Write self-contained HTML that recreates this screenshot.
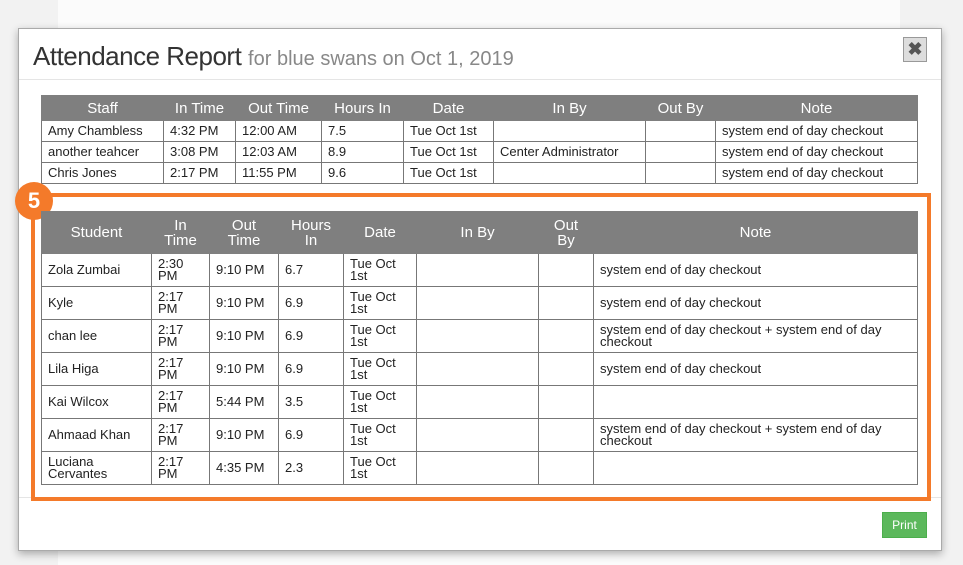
<!DOCTYPE html>
<html><head><style>
*{box-sizing:border-box;margin:0;padding:0}
body{width:963px;height:565px;overflow:hidden;background:#f2f2f2;font-family:"Liberation Sans",sans-serif;position:relative}
.bg{position:absolute;left:58px;top:0;width:842px;height:565px;background:#fbfbfb}
.modal{position:absolute;left:18px;top:28px;width:924px;height:523px;background:#fff;border:1px solid #aaa;box-shadow:0 3px 8px rgba(0,0,0,.3)}
.title{position:absolute;left:14px;top:12px;font-size:26px;color:#333;letter-spacing:-0.5px}
.title span{font-size:20px;color:#888;letter-spacing:0}
.hr{position:absolute;left:0;width:100%;height:1px;background:#e5e5e5}
.close{position:absolute;left:884px;top:8px;width:24px;height:25px;background:#ddd;border:1px solid #999;text-align:center;font-size:18px;font-weight:bold;color:#555;line-height:22px}
table{position:absolute;border-collapse:collapse;table-layout:fixed;font-size:13px;color:#222}
th{background:#7f7f7f;color:#fff;font-weight:normal;font-size:15px;line-height:15px;border:1px solid #7f7f7f}
td{border:1px solid #777;padding:0 6px;vertical-align:middle}
.t1 td{height:21px;line-height:14px}
.t2 td{height:33px;line-height:12px}
.orange{position:absolute;left:31px;top:193px;width:900px;height:308px;border:4px solid #f47a2a}
.circ{position:absolute;left:15px;top:182px;width:38px;height:38px;border-radius:50%;background:#f47a2a;color:#fff;font-weight:bold;font-size:22px;text-align:center;line-height:38px}
.print{position:absolute;left:863px;top:483px;width:45px;height:26px;background:#5cb85c;border:1px solid #4cae4c;color:#fff;font-size:12px;text-align:center;line-height:24px}
</style></head><body>
<div class="bg"></div>
<div class="modal">
<div class="title">Attendance Report <span>for blue swans on Oct 1, 2019</span></div>
<div class="close">✖</div>
<div class="hr" style="top:50px"></div>
<div class="hr" style="top:468px"></div>
<div class="print">Print</div>
</div>
<table class="t1" style="left:41px;top:95px;width:877px">
<colgroup><col style="width:122px"><col style="width:72px"><col style="width:86px"><col style="width:82px"><col style="width:90px"><col style="width:152px"><col style="width:70px"><col></colgroup>
<tr style="height:25px"><th>Staff</th><th>In Time</th><th>Out Time</th><th>Hours In</th><th>Date</th><th>In By</th><th>Out By</th><th>Note</th></tr>
<tr><td>Amy Chambless</td><td>4:32 PM</td><td>12:00 AM</td><td>7.5</td><td>Tue Oct 1st</td><td></td><td></td><td>system end of day checkout</td></tr>
<tr><td>another teahcer</td><td>3:08 PM</td><td>12:03 AM</td><td>8.9</td><td>Tue Oct 1st</td><td>Center Administrator</td><td></td><td>system end of day checkout</td></tr>
<tr><td>Chris Jones</td><td>2:17 PM</td><td>11:55 PM</td><td>9.6</td><td>Tue Oct 1st</td><td></td><td></td><td>system end of day checkout</td></tr>
</table>
<div class="orange"></div>
<div class="circ">5</div>
<table class="t2" style="left:41px;top:211px;width:877px">
<colgroup><col style="width:110px"><col style="width:58px"><col style="width:69px"><col style="width:65px"><col style="width:73px"><col style="width:122px"><col style="width:55px"><col></colgroup>
<tr style="height:42px"><th>Student</th><th>In<br>Time</th><th>Out<br>Time</th><th>Hours<br>In</th><th>Date</th><th>In By</th><th>Out<br>By</th><th>Note</th></tr>
<tr><td>Zola Zumbai</td><td>2:30<br>PM</td><td>9:10 PM</td><td>6.7</td><td>Tue Oct<br>1st</td><td></td><td></td><td>system end of day checkout</td></tr>
<tr><td>Kyle</td><td>2:17<br>PM</td><td>9:10 PM</td><td>6.9</td><td>Tue Oct<br>1st</td><td></td><td></td><td>system end of day checkout</td></tr>
<tr><td>chan lee</td><td>2:17<br>PM</td><td>9:10 PM</td><td>6.9</td><td>Tue Oct<br>1st</td><td></td><td></td><td>system end of day checkout + system end of day<br>checkout</td></tr>
<tr><td>Lila Higa</td><td>2:17<br>PM</td><td>9:10 PM</td><td>6.9</td><td>Tue Oct<br>1st</td><td></td><td></td><td>system end of day checkout</td></tr>
<tr><td>Kai Wilcox</td><td>2:17<br>PM</td><td>5:44 PM</td><td>3.5</td><td>Tue Oct<br>1st</td><td></td><td></td><td></td></tr>
<tr><td>Ahmaad Khan</td><td>2:17<br>PM</td><td>9:10 PM</td><td>6.9</td><td>Tue Oct<br>1st</td><td></td><td></td><td>system end of day checkout + system end of day<br>checkout</td></tr>
<tr><td>Luciana<br>Cervantes</td><td>2:17<br>PM</td><td>4:35 PM</td><td>2.3</td><td>Tue Oct<br>1st</td><td></td><td></td><td></td></tr>
</table>
</body></html>
